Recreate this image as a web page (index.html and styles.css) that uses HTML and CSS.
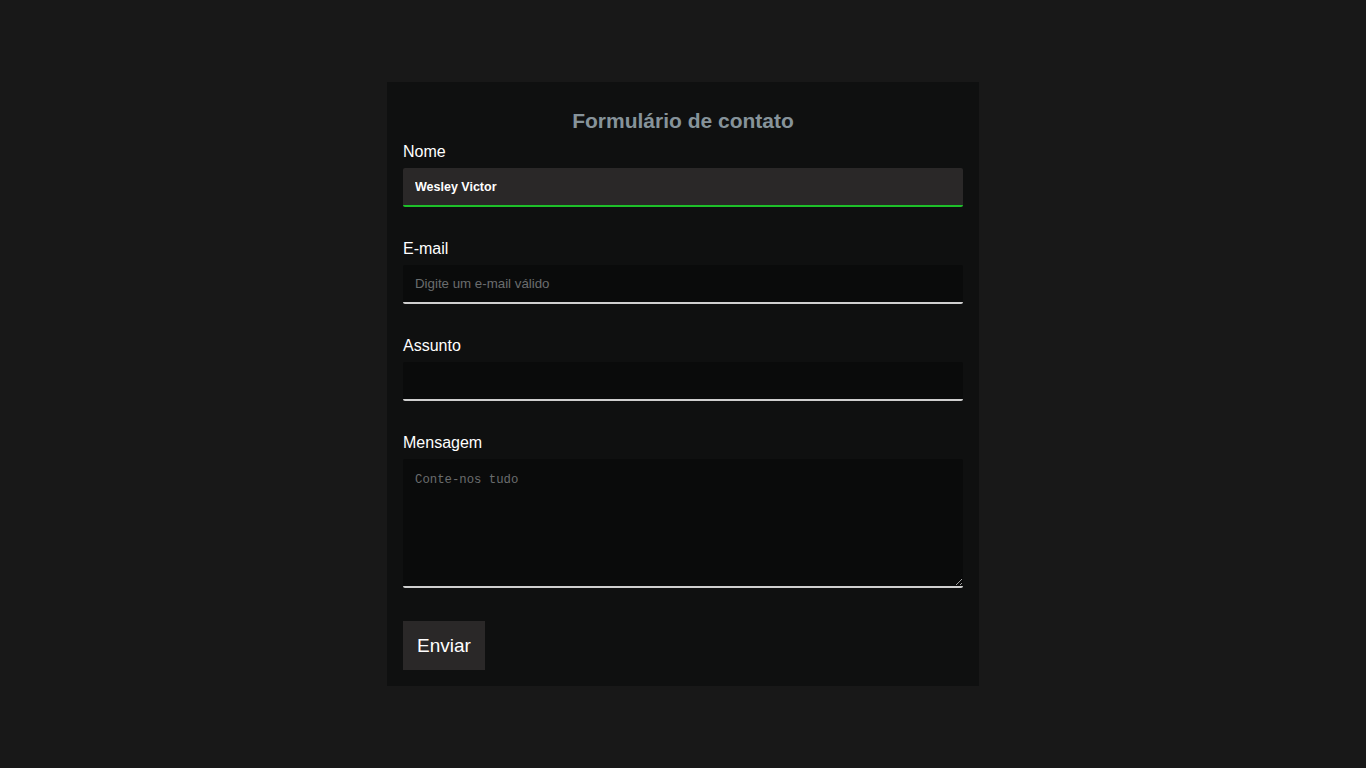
FILE: index.html
```html
<!DOCTYPE html>
<html lang="pt-BR">
<head>
	<meta charset="UTF-8">
	<title>Formulário de contato</title>
	<link rel="stylesheet" href="styles.css">
</head>
<body>
	<form class="contato" action="#">
		<h2 class="titulo">Formulário de contato</h2>

		<label class="rotulo" for="nome">Nome</label>
		<input class="campo" type="text" id="nome" value="Wesley Victor" autofocus>

		<label class="rotulo" for="email">E-mail</label>
		<input class="campo" type="email" id="email" placeholder="Digite um e-mail válido">

		<label class="rotulo" for="assunto">Assunto</label>
		<input class="campo" type="text" id="assunto">

		<label class="rotulo" for="mensagem">Mensagem</label>
		<textarea class="campo texto" id="mensagem" placeholder="Conte-nos tudo"></textarea>

		<button class="enviar" type="submit">Enviar</button>
	</form>
</body>
</html>
```

FILE: styles.css
```css
body{margin: 0;background-color: #181818;font-family: "Liberation Sans", Arial, sans-serif;}
.contato{width: 560px;margin: 82px auto 0;padding: 16px;background-color: #0f1010;display: flex;flex-direction: column;align-items: flex-start;}
.titulo{align-self: stretch;margin: 11px 0 9px;font-size: 21px;line-height: 24px;text-align: center;color: #86939a;}
.rotulo{font-size: 16px;line-height: 19px;color: #fff;margin-bottom: 7px;}
.campo{box-sizing: border-box;width: 560px;height: 39px;margin: 0 0 32px;padding: 0 12px;border: 0;border-bottom: 2px solid #cfcfcf;border-radius: 2px;background-color: #0a0b0b;color: #fff;caret-color: #fff;font-family: "Liberation Sans", Arial, sans-serif;font-size: 12.5px;font-weight: bold;outline: none;}
.campo::placeholder{color: #6a6d6e;font-weight: normal;font-size: 13.3px;}
.campo:focus{background-color: #2a2828;border-bottom-color: #1ec02a;}
.texto{display: block;height: 129px;padding: 14px 12px 12px;margin-bottom: 33px;font-family: "Liberation Mono", "DejaVu Sans Mono", monospace;font-size: 12.3px;font-weight: normal;resize: both;}
.texto::placeholder{font-size: 12.3px;color: #6a6d6e;}
.enviar{height: 49px;padding: 0 14px;border: 0;background-color: #2a2828;color: #fff;font-family: "Liberation Sans", Arial, sans-serif;font-size: 19px;cursor: pointer;}
```
